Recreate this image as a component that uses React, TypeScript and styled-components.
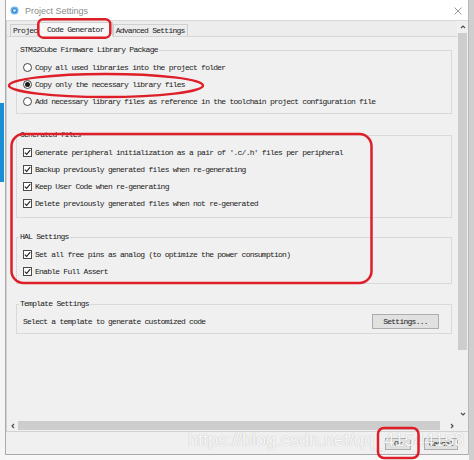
import React from "react";
import styled, { createGlobalStyle } from "styled-components";

const GlobalStyle = createGlobalStyle`
  html, body { margin: 0; padding: 0; background: #f6f6f6; }
  body { width: 474px; height: 460px; overflow: hidden; }
  * { box-sizing: border-box; }
`;

const MONO = `"Liberation Mono", "DejaVu Sans Mono", monospace`;

const Screen = styled.div`
  position: relative;
  width: 474px;
  height: 460px;
  display: grid;
  grid-template-columns: 5px 464px 5px;
  grid-template-rows: 455px 5px;
  background: #f6f6f6;
  overflow: hidden;
  font-family: ${MONO};
`;

const LeftGutter = styled.div`
  grid-column: 1;
  grid-row: 1 / 3;
  background: #f5f5f5;
  padding-top: 103px;
`;

const BlueMark = styled.div`
  width: 4px;
  height: 79px;
  background: #1b8fd6;
`;

const RightGutter = styled.div`
  grid-column: 3;
  grid-row: 1 / 3;
  background: #cfcfcf;
`;

const BottomStrip = styled.div`
  grid-column: 2;
  grid-row: 2;
  background: #f7f7f7;
`;

const Window = styled.div`
  grid-column: 2;
  grid-row: 1;
  display: flex;
  flex-direction: column;
  background: #f0f0f0;
  border-left: 1px solid #aaaaaa;
  border-right: 1px solid #b9b9b9;
  border-bottom: 1px solid #aaaaaa;
`;

const TitleBar = styled.div`
  height: 21px;
  flex: none;
  display: flex;
  align-items: center;
  padding: 1px 6px 0 4px;
  background: #ffffff;
  border-bottom: 1px solid #d8d8d8;
`;

const TitleText = styled.span`
  margin-left: 6px;
  font-family: "Liberation Sans", Arial, sans-serif;
  font-size: 9px;
  color: #8c8c8c;
  flex: 1;
`;

const ScrollPane = styled.div`
  height: 411px;
  flex: none;
  display: grid;
  grid-template-columns: 450px 11px;
  grid-template-rows: 399px 11px;
  border-left: 1px solid #d2d2d2;
  border-bottom: 1px solid #d2d2d2;
`;

const Viewport = styled.div`
  grid-column: 1;
  grid-row: 1;
  overflow: hidden;
  background: #f0f0f0;
`;

const TabStrip = styled.div`
  height: 16px;
  display: flex;
  align-items: flex-end;
  padding-left: 3px;
  background: #ededed;
  border-bottom: 1px solid #d6d6d6;
`;

const Tab = styled.div<{ $selected?: boolean; $clip?: number; $pad: number }>`
  height: ${(p) => (p.$selected ? 15 : 13)}px;
  ${(p) => (p.$clip ? `width: ${p.$clip}px;` : "")}
  overflow: hidden;
  white-space: nowrap;
  display: flex;
  align-items: center;
  padding: ${(p) => (p.$selected ? 0 : 1)}px ${(p) => p.$pad}px 0 ${(p) => p.$pad}px;
  margin-bottom: -1px;
  background: ${(p) => (p.$selected ? "#f7f7f7" : "#ececec")};
  border: 1px solid #cfcfcf;
  border-bottom: ${(p) => (p.$selected ? "1px solid #f7f7f7" : "1px solid #d6d6d6")};
  font-size: 8px;
  letter-spacing: -0.75px;
  color: #1b1b1b;
  line-height: 10px;
`;

const Panel = styled.div`
  padding: 8px 5px 0 9px;
`;

const Group = styled.fieldset<{ $gap: number; $bottom: number }>`
  margin: ${(p) => p.$gap}px 0 0 0;
  padding: 4px 6px ${(p) => p.$bottom}px 6px;
  min-width: 0;
  border: 1px solid #d9d9d9;
`;

const GroupTitle = styled.legend`
  margin-left: -4px;
  padding: 0 1px;
  font-family: ${MONO};
  font-size: 8px;
  line-height: 10px;
  letter-spacing: -0.75px;
  color: #1b1b1b;
`;

const Row = styled.div`
  height: 17px;
  display: flex;
  align-items: center;
  gap: 3px;
`;

const Label = styled.span`
  font-size: 8px;
  line-height: 10px;
  letter-spacing: -0.75px;
  color: #1b1b1b;
  white-space: nowrap;
`;

const Spacer = styled.div`
  flex: 1;
`;

const Radio = styled.span<{ $checked?: boolean }>`
  width: 9px;
  height: 9px;
  flex: none;
  border-radius: 50%;
  border: 1px solid #444;
  background: #fff;
  display: flex;
  align-items: center;
  justify-content: center;
  &::after {
    content: "";
    width: 5px;
    height: 5px;
    border-radius: 50%;
    background: ${(p) => (p.$checked ? "#1a1a1a" : "transparent")};
  }
`;

const CheckBox = styled.span`
  width: 9px;
  height: 9px;
  flex: none;
  border: 1px solid #4a4a4a;
  background: #fff;
  display: flex;
  align-items: center;
  justify-content: center;
`;

const PushButton = styled.div<{ $w: number; $h: number }>`
  width: ${(p) => p.$w}px;
  height: ${(p) => p.$h}px;
  flex: none;
  display: flex;
  align-items: center;
  justify-content: center;
  background: #e1e1e1;
  border: 1px solid #adadad;
  font-size: 8px;
  letter-spacing: -0.75px;
  color: #1b1b1b;
`;

const SettingsButton = styled(PushButton)`
  margin-right: 6px;
`;

const VScroll = styled.div`
  grid-column: 2;
  grid-row: 1;
  display: flex;
  flex-direction: column;
  background: #f0f0f0;
`;

const ArrowCell = styled.div`
  width: 11px;
  height: 12px;
  flex: none;
  display: flex;
  align-items: center;
  justify-content: center;
`;

const HArrowCell = styled(ArrowCell)`
  height: 11px;
`;

const VTrack = styled.div`
  flex: 1;
  padding: 0 1px;
`;

const VThumb = styled.div<{ $len: number }>`
  height: ${(p) => p.$len}px;
  background: #cdcdcd;
`;

const HScroll = styled.div`
  grid-column: 1;
  grid-row: 2;
  display: flex;
  background: #f0f0f0;
`;

const HTrack = styled.div`
  flex: 1;
  padding: 1px 0;
`;

const HThumb = styled.div<{ $len: number }>`
  width: ${(p) => p.$len}px;
  height: 9px;
  background: #cdcdcd;
`;

const Corner = styled.div`
  grid-column: 2;
  grid-row: 2;
  background: #f0f0f0;
`;

const ButtonBar = styled.div`
  flex: 1;
  display: flex;
  align-items: center;
  justify-content: flex-end;
  gap: 13px;
  padding: 1px 10px 0 0;
  background: #f0f0f0;
`;

const Watermark = styled.div`
  position: absolute;
  left: 188px;
  top: 430px;
  font-family: "Liberation Sans", Arial, sans-serif;
  font-size: 18px;
  line-height: 20px;
  color: rgba(255, 255, 255, 0.92);
  text-shadow: 0 0 1px rgba(110, 110, 110, 0.55);
  white-space: nowrap;
  pointer-events: none;
`;

const Marks = styled.svg`
  position: absolute;
  left: 0;
  top: 0;
  pointer-events: none;
`;

const AppIcon = () => (
  <svg width="9" height="9" viewBox="0 0 9 9">
    <circle cx="4.5" cy="4.5" r="4" fill="#6fb3e8" />
    <circle cx="4.5" cy="4.5" r="2.6" fill="#3b8fd4" />
    <circle cx="4.5" cy="4.5" r="1.2" fill="#e8f4fc" />
  </svg>
);

const CloseIcon = () => (
  <svg width="8" height="8" viewBox="0 0 8 8">
    <path d="M0.5 0.5 L7.5 7.5 M7.5 0.5 L0.5 7.5" stroke="#9a9a9a" strokeWidth="1" />
  </svg>
);

const Chevron = ({ dir }: { dir: "up" | "down" | "left" | "right" }) => {
  const d = {
    up: "M1 4 L3 2 L5 4",
    down: "M1 2 L3 4 L5 2",
    left: "M4 1 L2 3 L4 5",
    right: "M2 1 L4 3 L2 5",
  }[dir];
  return (
    <svg width="6" height="6" viewBox="0 0 6 6">
      <path d={d} stroke="#505050" strokeWidth="1.2" fill="none" />
    </svg>
  );
};

const Check = () => (
  <svg width="7" height="7" viewBox="0 0 7 7">
    <path d="M0.8 3.6 L2.7 5.4 L6.2 1.2" stroke="#222" strokeWidth="1.1" fill="none" />
  </svg>
);

const radios = [
  { text: "Copy all used libraries into the project folder", checked: false },
  { text: "Copy only the necessary library files", checked: true },
  {
    text: "Add necessary library files as reference in the toolchain project configuration file",
    checked: false,
  },
];

const generated = [
  "Generate peripheral initialization as a pair of '.c/.h' files per peripheral",
  "Backup previously generated files when re-generating",
  "Keep User Code when re-generating",
  "Delete previously generated files when not re-generated",
];

const hal = [
  "Set all free pins as analog (to optimize the power consumption)",
  "Enable Full Assert",
];

export default function App() {
  return (
    <Screen>
      <GlobalStyle />
      <LeftGutter>
        <BlueMark />
      </LeftGutter>
      <Window>
        <TitleBar>
          <AppIcon />
          <TitleText>Project Settings</TitleText>
          <CloseIcon />
        </TitleBar>
        <ScrollPane>
          <Viewport>
            <TabStrip>
              <Tab $clip={28} $pad={2}>Project</Tab>
              <Tab $selected $pad={8}>Code Generator</Tab>
              <Tab $pad={2}>Advanced Settings</Tab>
            </TabStrip>
            <Panel>
              <Group $gap={0} $bottom={3}>
                <GroupTitle>STM32Cube Firmware Library Package</GroupTitle>
                {radios.map((r) => (
                  <Row key={r.text}>
                    <Radio $checked={r.checked} />
                    <Label>{r.text}</Label>
                  </Row>
                ))}
              </Group>
              <Group $gap={16} $bottom={5}>
                <GroupTitle>Generated files</GroupTitle>
                {generated.map((t) => (
                  <Row key={t}>
                    <CheckBox>
                      <Check />
                    </CheckBox>
                    <Label>{t}</Label>
                  </Row>
                ))}
              </Group>
              <Group $gap={14} $bottom={3}>
                <GroupTitle>HAL Settings</GroupTitle>
                {hal.map((t) => (
                  <Row key={t}>
                    <CheckBox>
                      <Check />
                    </CheckBox>
                    <Label>{t}</Label>
                  </Row>
                ))}
              </Group>
              <Group $gap={15} $bottom={3}>
                <GroupTitle>Template Settings</GroupTitle>
                <Row>
                  <Label>Select a template to generate customized code</Label>
                  <Spacer />
                  <SettingsButton $w={67} $h={15}>Settings...</SettingsButton>
                </Row>
              </Group>
            </Panel>
          </Viewport>
          <VScroll>
            <ArrowCell>
              <Chevron dir="up" />
            </ArrowCell>
            <VTrack>
              <VThumb $len={317} />
            </VTrack>
            <ArrowCell>
              <Chevron dir="down" />
            </ArrowCell>
          </VScroll>
          <HScroll>
            <HArrowCell>
              <Chevron dir="left" />
            </HArrowCell>
            <HTrack>
              <HThumb $len={422} />
            </HTrack>
            <HArrowCell>
              <Chevron dir="right" />
            </HArrowCell>
          </HScroll>
          <Corner />
        </ScrollPane>
        <ButtonBar>
          <PushButton $w={26} $h={12}>Ok</PushButton>
          <PushButton $w={34} $h={12}>Cancel</PushButton>
        </ButtonBar>
      </Window>
      <RightGutter />
      <BottomStrip />
      <Watermark>https://blog.csdn.net/qq_41544158</Watermark>
      <Marks width="474" height="460" viewBox="0 0 474 460">
        <g fill="none" stroke="#de1e28" strokeWidth="2.5">
          <rect x="38.3" y="19.2" width="72" height="18.5" rx="5" />
          <ellipse cx="106" cy="85.5" rx="97" ry="11.5" />
          <rect x="11.5" y="134" width="360" height="149" rx="12" />
          <rect x="378" y="428" width="40.5" height="30" rx="6" />
        </g>
      </Marks>
    </Screen>
  );
}
